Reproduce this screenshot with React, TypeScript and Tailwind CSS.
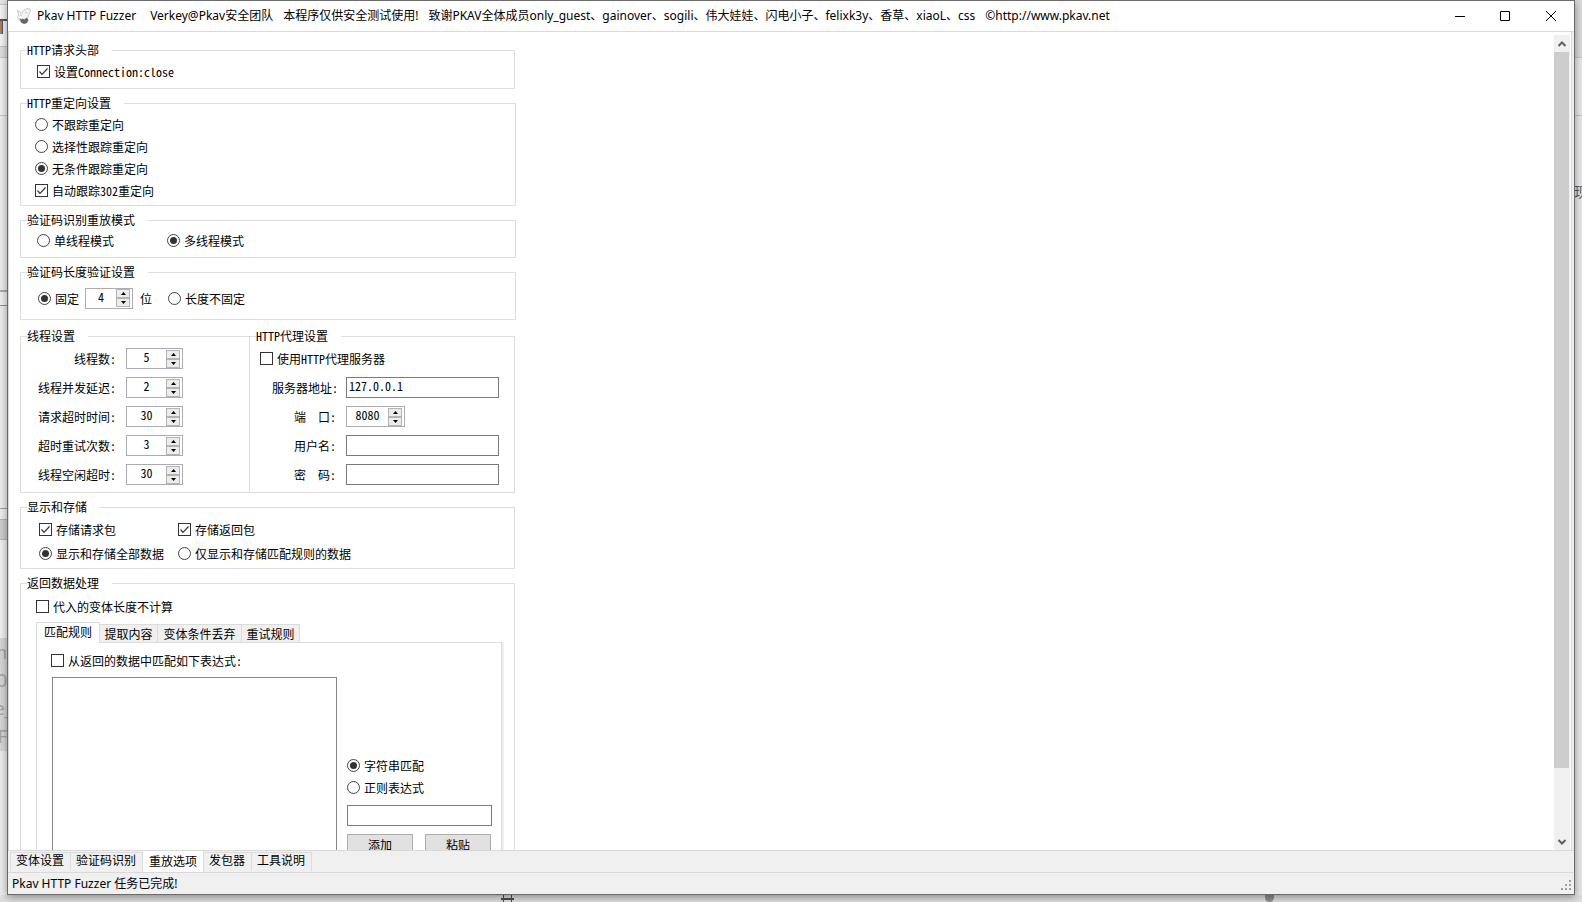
import { useState } from 'react'
import type { ReactNode } from 'react'
import clsx from 'clsx'

const THREAD_FIELDS = [
  { id: 'threads', label: '线程数:', value: '5' },
  { id: 'delay', label: '线程并发延迟:', value: '2' },
  { id: 'timeout', label: '请求超时时间:', value: '30' },
  { id: 'retries', label: '超时重试次数:', value: '3' },
  { id: 'idle', label: '线程空闲超时:', value: '30' },
]

const RULE_TABS = [
  '匹配规则',
  '提取内容',
  '变体条件丢弃',
  '重试规则',
]

const MAIN_TABS = [
  '变体设置',
  '验证码识别',
  '重放选项',
  '发包器',
  '工具说明',
]

type GroupProps = {
  title: string
  className?: string
  bodyClassName?: string
  children: ReactNode
}

const Group = ({
  title,
  className,
  bodyClassName,
  children,
}: GroupProps) => (
  <fieldset className={clsx('min-w-0 border border-[#dcdcdc]', className)}>
    <legend className="ml-1.5 h-[17px] pr-[13px] leading-[15px] whitespace-nowrap">
      {title}
    </legend>
    <div className={bodyClassName}>{children}</div>
  </fieldset>
)

type ChoiceProps = {
  children: ReactNode
  defaultChecked?: boolean
  className?: string
}

const Check = ({ children, defaultChecked, className }: ChoiceProps) => (
  <label
    className={clsx(
      'flex h-[22px] items-center gap-1 whitespace-nowrap',
      className,
    )}
  >
    <span className="grid size-[13px] shrink-0">
      <input
        type="checkbox"
        defaultChecked={defaultChecked}
        className="peer col-start-1 row-start-1 size-[13px] appearance-none border border-[#333] bg-white"
      />
      <svg
        viewBox="0 0 13 13"
        className="pointer-events-none col-start-1 row-start-1 hidden size-[13px] peer-checked:block"
        fill="none"
        stroke="#333"
        strokeWidth="1.2"
      >
        <path d="M2.5 6.5 5 9.3 10.5 3.5" />
      </svg>
    </span>
    <span>{children}</span>
  </label>
)

const Radio = ({
  children,
  defaultChecked,
  className,
  name,
}: ChoiceProps & { name: string }) => (
  <label
    className={clsx(
      'flex h-[22px] items-center gap-1 whitespace-nowrap',
      className,
    )}
  >
    <input
      type="radio"
      name={name}
      defaultChecked={defaultChecked}
      className="grid size-[13px] shrink-0 appearance-none place-content-center rounded-full border border-[#444] bg-white before:size-[7px] before:rounded-full checked:before:bg-[#333]"
    />
    <span>{children}</span>
  </label>
)

type SpinnerProps = {
  id: string
  initial: string
  label?: string
  className?: string
}

const Spinner = ({ id, initial, label, className }: SpinnerProps) => {
  const [value, setValue] = useState(initial)
  const step = (by: number) => setValue(String(Number(value) + by))
  const button =
    'grid h-[9px] place-items-center border border-[#b4b4b4] bg-[#ececec]'
  return (
    <div
      className={clsx(
        'flex h-[21px] items-center border border-[#ababb3] bg-white pr-0.5',
        className,
      )}
    >
      <input
        id={id}
        aria-label={label}
        value={value}
        onChange={(e) => setValue(e.target.value)}
        className="h-full w-0 flex-1 pb-1 text-center outline-none [font-feature-settings:'hwid']"
      />
      <div className="flex w-[14px] flex-col">
        <button
          type="button"
          aria-label="增加"
          className={button}
          onClick={() => step(1)}
        >
          <svg width="5" height="3" viewBox="0 0 5 3">
            <path d="M0 3 2.5 0 5 3z" />
          </svg>
        </button>
        <button
          type="button"
          aria-label="减少"
          className={button}
          onClick={() => step(-1)}
        >
          <svg width="5" height="3" viewBox="0 0 5 3">
            <path d="M0 0 2.5 3 5 0z" />
          </svg>
        </button>
      </div>
    </div>
  )
}

const FIELD =
  "h-[21px] border border-[#7a7a7a] bg-white pb-1 pl-0.5 outline-none [font-feature-settings:'hwid']"

const PUSH =
  'h-[21px] w-[66px] border border-[#adadad] bg-[#e1e1e1] text-center leading-[17px]'

const TitleBar = () => (
  <header className="flex h-[31px] shrink-0 items-center border-b border-[#d9d9d9] pl-2">
    <svg width="16" height="16" viewBox="0 0 16 16" aria-hidden="true">
      <path
        d="M1.500 2 4 4.500 6 5l2-3 3-1.500 3 .5.5 2.500-2 3.500-1 4-3 3-4-.5-3-4 1-3z"
        fill="#f4f4f4"
        stroke="#b9b9b9"
        strokeWidth=".7"
      />
      <path d="m3.500 10 2 1.500 1-1 2 1 2-2 2 2.500-1.500 3-3 1-3-1.500z" fill="#666" />
      <path d="M4 6.500 6 8M9 4l2 1" stroke="#aaa" strokeWidth=".7" />
    </svg>
    <h1 className="ml-[5px] flex flex-1 gap-2.5 overflow-hidden text-[12px] whitespace-nowrap font-['Noto_Sans','Noto_Sans_CJK_SC',sans-serif]">
      <span className="mr-1">Pkav HTTP Fuzzer</span>
      <span>Verkey@Pkav安全团队</span>
      <span>本程序仅供安全测试使用!</span>
      <span>
        致谢PKAV全体成员only_guest、gainover、sogili、伟大娃娃、闪电小子、felixk3y、香草、xiaoL、css
      </span>
      <span>©http://www.pkav.net</span>
    </h1>
    <button
      type="button"
      aria-label="最小化"
      className="grid h-full w-[45px] place-items-center"
    >
      <svg width="10" height="10" stroke="#000">
        <path d="M0 5.5h10" />
      </svg>
    </button>
    <button
      type="button"
      aria-label="最大化"
      className="grid h-full w-[46px] place-items-center"
    >
      <svg width="10" height="10" stroke="#000" fill="none">
        <path d="M.5.5h9v9h-9z" />
      </svg>
    </button>
    <button
      type="button"
      aria-label="关闭"
      className="grid h-full w-[46px] place-items-center"
    >
      <svg width="10" height="10" stroke="#000">
        <path d="m0 0 10 10M10 0 0 10" />
      </svg>
    </button>
  </header>
)

const ScrollBar = () => (
  <div className="mt-[3px] mr-px flex w-4 shrink-0 flex-col bg-[#f0f0f0]">
    <button
      type="button"
      aria-label="向上滚动"
      className="grid h-[17px] place-items-center"
    >
      <svg width="8" height="6" fill="none" stroke="#606060" strokeWidth="2">
        <path d="M.5 5 4 1.500 7.500 5" />
      </svg>
    </button>
    <div className="flex flex-1 flex-col pr-px">
      <div className="flex-[716] bg-[#cdcdcd]" />
      <div className="flex-[65]" />
    </div>
    <button
      type="button"
      aria-label="向下滚动"
      className="grid h-[17px] place-items-center"
    >
      <svg width="8" height="6" fill="none" stroke="#606060" strokeWidth="2">
        <path d="M.5 1 4 4.500 7.500 1" />
      </svg>
    </button>
  </div>
)

const ResponseRules = () => (
  <div className="ml-[15px] w-[466px]">
    <div role="tablist" className="flex items-end">
      {RULE_TABS.map((tab, i) => (
        <button
          key={tab}
          type="button"
          role="tab"
          aria-selected={i === 0}
          className={clsx(
            'border-[#dcdcdc] text-center',
            i === 0
              ? '-mb-px h-[21px] w-[64px] border border-b-0 bg-white pb-0.5 leading-[18px]'
              : 'h-[18px] border-t border-r bg-[#f0f0f0] leading-[17px]',
            i === 2 && 'w-[84px]',
            (i === 1 || i === 3) && 'w-[58px]',
          )}
        >
          {tab}
        </button>
      ))}
    </div>
    <div className="border border-[#dcdcdc] pt-1.5 pl-3.5 shadow-[2px_0_0_#f0f0f0]">
      <Check>从返回的数据中匹配如下表达式:</Check>
      <div className="flex gap-2.5 pt-1.5">
        <textarea
          aria-label="匹配表达式"
          className="ml-px h-[260px] w-[285px] resize-none border border-[#828790] bg-white outline-none"
        />
        <div className="w-[145px] pt-[77px]">
          <Radio name="match" defaultChecked>
            字符串匹配
          </Radio>
          <Radio name="match">正则表达式</Radio>
          <input
            aria-label="表达式"
            className={clsx(FIELD, 'mt-[7px] block w-full')}
          />
          <div className="mt-2 flex gap-3">
            <button type="button" className={PUSH}>
              添加
            </button>
            <button type="button" className={PUSH}>
              粘贴
            </button>
          </div>
        </div>
      </div>
    </div>
  </div>
)

// Half-width Latin glyphs keep every label on the 6px/12px character grid
const Options = () => (
  <main className="flex flex-1 flex-col gap-1.5 overflow-hidden pt-2.5 pl-[11px] leading-[17px] [font-feature-settings:'hwid']">
    <Group
      title="HTTP请求头部"
      className="h-[47px] w-[495px] shrink-0"
      bodyClassName="pt-px pl-4"
    >
      <Check defaultChecked>设置Connection:close</Check>
    </Group>

    <Group
      title="HTTP重定向设置"
      className="h-[111px] w-[496px] shrink-0"
      bodyClassName="pt-px pl-3.5"
    >
      <Radio name="redirect">不跟踪重定向</Radio>
      <Radio name="redirect">选择性跟踪重定向</Radio>
      <Radio name="redirect" defaultChecked>
        无条件跟踪重定向
      </Radio>
      <Check defaultChecked>自动跟踪302重定向</Check>
    </Group>

    <Group
      title="验证码识别重放模式"
      className="h-[46px] w-[496px] shrink-0"
      bodyClassName="flex pl-4"
    >
      <Radio name="mode" className="w-[130px]">
        单线程模式
      </Radio>
      <Radio name="mode" defaultChecked>
        多线程模式
      </Radio>
    </Group>

    <Group
      title="验证码长度验证设置"
      className="h-[56px] w-[496px] shrink-0"
      bodyClassName="flex items-center pt-1.5 pl-[17px]"
    >
      <Radio name="length" defaultChecked>
        固定
      </Radio>
      <Spinner
        id="digits"
        label="验证码位数"
        initial="4"
        className="ml-1.5 w-[48px]"
      />
      <span className="ml-[7px] w-7">位</span>
      <Radio name="length">长度不固定</Radio>
    </Group>

    <div className="mt-0.5 flex shrink-0">
      <Group
        title="线程设置"
        className="h-[165px] w-[229px] border-r-0"
        bodyClassName="flex flex-col gap-2 pt-[3px]"
      >
        {THREAD_FIELDS.map((field) => (
          <div key={field.id} className="flex items-center gap-2.5">
            <label htmlFor={field.id} className="w-[95px] text-right">
              {field.label}
            </label>
            <Spinner
              id={field.id}
              initial={field.value}
              className="w-[57px]"
            />
          </div>
        ))}
      </Group>
      <Group
        title="HTTP代理设置"
        className="h-[165px] w-[266px]"
        bodyClassName="pt-0.5"
      >
        <Check className="ml-2.5">使用HTTP代理服务器</Check>
        <div className="grid grid-cols-[88px_153px] items-center gap-x-2 gap-y-2 pt-2">
          <label htmlFor="host" className="text-right">
            服务器地址:
          </label>
          <input id="host" defaultValue="127.0.0.1" className={FIELD} />
          <label htmlFor="port" className="pr-0.5 text-right">
            端&nbsp;&nbsp;口:
          </label>
          <Spinner id="port" initial="8080" className="w-[59px]" />
          <label htmlFor="user" className="pr-0.5 text-right">
            用户名:
          </label>
          <input id="user" className={FIELD} />
          <label htmlFor="password" className="pr-0.5 text-right">
            密&nbsp;&nbsp;码:
          </label>
          <input id="password" type="password" className={FIELD} />
        </div>
      </Group>
    </div>

    <Group
      title="显示和存储"
      className="h-[70px] w-[495px] shrink-0"
      bodyClassName="grid grid-cols-[139px_1fr] gap-y-0.5 pt-0.5 pl-[18px]"
    >
      <Check defaultChecked>存储请求包</Check>
      <Check defaultChecked>存储返回包</Check>
      <Radio name="store" defaultChecked>
        显示和存储全部数据
      </Radio>
      <Radio name="store">仅显示和存储匹配规则的数据</Radio>
    </Group>

    <Group
      title="返回数据处理"
      className="w-[495px] shrink-0"
      bodyClassName="pt-[3px]"
    >
      <Check className="mb-[5px] ml-[15px]">代入的变体长度不计算</Check>
      <ResponseRules />
    </Group>
  </main>
)

const MainTabs = () => (
  <nav
    role="tablist"
    className="flex h-[22px] shrink-0 border-t border-[#d9d9d9] pl-0.5"
  >
    {MAIN_TABS.map((tab, i) => {
      const active = tab === '重放选项'
      return (
        <button
          key={tab}
          type="button"
          role="tab"
          aria-selected={active}
          className={clsx(
            'border-[#dcdcdc]',
            active
              ? 'h-[21px] border-r bg-white px-1.5 pb-0.5 leading-[15px]'
              : 'mt-px flex h-[19px] border-t border-r pr-1.5 pl-[5px] leading-[13px]',
            i === 0 && 'border-l',
          )}
        >
          {tab}
        </button>
      )
    })}
  </nav>
)

const StatusBar = () => (
  <footer className="flex h-[22px] shrink-0 items-center justify-between border-t border-[#d9d9d9] pr-0.5 pl-1 font-['Noto_Sans','Noto_Sans_CJK_SC',sans-serif]">
    <p>Pkav HTTP Fuzzer 任务已完成!</p>
    <svg
      width="11"
      height="11"
      fill="#a0a0a0"
      className="mt-1"
      aria-hidden="true"
    >
      <path d="M8 0h2v2h-2zM8 4h2v2h-2zM8 8h2v2h-2zM4 4h2v2h-2zM4 8h2v2h-2zM0 8h2v2h-2z" />
    </svg>
  </footer>
)

// Slice of the editor that stays visible left of the window
const DesktopLeft = () => (
  <div
    aria-hidden="true"
    className="flex w-[7px] shrink-0 flex-col overflow-hidden bg-[#ececec]"
  >
    <div className="h-[5px] border-b border-[#c8c8c8] bg-[#e4e4e4]" />
    <div className="h-[42px] border-b border-[#c4c4c4] bg-[#f3f3f3] pt-3.5">
      <div className="flex h-[15px] border-t-2 border-[#555]">
        <div className="w-0.5 bg-[#b97b40]" />
        <div className="w-px bg-[#3d5a8f]" />
      </div>
    </div>
    <div className="h-[11px] border-b border-[#c8c8c8] bg-[#dedede]" />
    <div className="h-[58px] border-b border-[#c8c8c8] bg-[#f0f0f0]" />
    <div className="h-[176px] border-b-2 border-[#a9adb5]" />
    <div className="h-[14px] border-b border-[#8c9199] bg-[#eee]" />
    <div className="h-[203px] border-b border-[#9a9fa8]" />
    <div className="h-[10px] bg-[#eee]" />
    <div className="h-[21px] border-y border-[#b5b5b5] bg-[#cdcdcd]" />
    <div className="h-[98px] bg-[#f0f0f0]" />
    <div className="h-[113px] bg-[#d6d6d6] font-['Noto_Sans',sans-serif] text-[18px] leading-[28px] text-[#aaa4a4]">
      <div className="flex justify-end">m</div>
      <div className="flex justify-end">0</div>
      <div className="flex justify-center">e_</div>
      <div className="flex justify-end">F</div>
    </div>
  </div>
)

const DesktopRight = () => (
  <div
    aria-hidden="true"
    className="flex w-[7px] shrink-0 flex-col overflow-hidden bg-[#e8e8e8]"
  >
    <div className="h-[58px] border-b border-[#c4c4c4] bg-[#dadada]" />
    <div className="h-[58px] border-b border-[#c4c4c4]" />
    <div className="flex justify-end pt-[64px] font-['Noto_Sans_CJK_SC',sans-serif] text-[14px] leading-[22px] text-[#555a68]">
      <div className="w-[8px]">现</div>
    </div>
  </div>
)

const App = () => (
  <div className="flex h-screen flex-col overflow-hidden bg-[#dedede] font-['Noto_Sans_CJK_SC',sans-serif] text-[12px] text-black">
    <div className="flex min-h-0 flex-1">
      <DesktopLeft />
      <div className="relative flex min-w-0 flex-1 flex-col border border-[#6b6b6b] bg-[#f0f0f0] shadow-[0_2px_8px_rgba(0,0,0,0.4)]">
        <div className="flex min-h-0 flex-1 flex-col bg-white">
          <TitleBar />
          <div className="flex min-h-0 flex-1 bg-[#f0f0f0] pr-0.5">
            <div className="flex min-w-0 flex-1 border-r border-l border-[#d9d9d9] bg-white">
              <Options />
              <ScrollBar />
            </div>
          </div>
        </div>
        <MainTabs />
        <StatusBar />
      </div>
      <DesktopRight />
    </div>
    <div
      aria-hidden="true"
      className="flex h-[7px] shrink-0 overflow-hidden pl-[501px]"
    >
      <svg width="13" height="7" fill="none" stroke="#4a4d5c">
        <path d="M2.500 0v7M10.500 0v7" />
        <path d="M0 4h13" strokeWidth="2" />
      </svg>
      <div className="ml-[751px] h-[7px] w-[9px] rounded-b-full bg-[#8f8f8f]" />
    </div>
  </div>
)

export default App
